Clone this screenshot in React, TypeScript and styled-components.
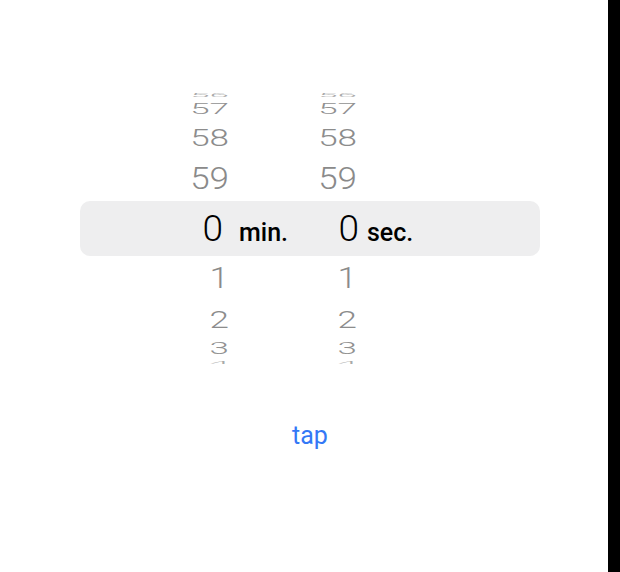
import React from "react";
import styled, { createGlobalStyle } from "styled-components";

const GlobalStyle = createGlobalStyle`
  html, body {
    margin: 0;
    padding: 0;
    background: #ffffff;
  }
  body {
    height: 572px;
    box-shadow: inset -12px 0 0 #000000;
    font-family: Roboto, "Liberation Sans", Arial, sans-serif;
  }
`;

const Screen = styled.div`
  height: 572px;
  padding-top: 88px;
  box-sizing: border-box;
  display: flex;
  flex-direction: column;
  align-items: center;
`;

const Picker = styled.div`
  width: 460px;
  display: flex;
  flex-direction: column;
`;

const WheelRow = styled.div<{ $height: number; $clip?: boolean }>`
  height: ${(p) => p.$height}px;
  display: grid;
  grid-template-columns: 149px 73px 55px 1fr;
  grid-auto-rows: ${(p) => p.$height}px;
  align-items: center;
  overflow: ${(p) => (p.$clip ? "hidden" : "visible")};
`;

const Digit = styled.span<{ $squash: number; $tone: string }>`
  justify-self: end;
  align-self: center;
  font-size: 35px;
  line-height: 1;
  font-weight: 300;
  color: ${(p) => p.$tone};
  transform: scaleY(${(p) => p.$squash});
  transform-origin: center;
`;

const Spacer = styled.span``;

const SelectedRow = styled.div`
  margin: 5px 0 0;
  height: 55px;
  border-radius: 10px;
  background: #eeeeef;
  display: grid;
  grid-template-columns: 143px 80px 56px 1fr;
  align-items: baseline;
  align-content: center;
`;

const SelectedDigit = styled.span`
  justify-self: end;
  font-size: 37px;
  line-height: 1;
  font-weight: 300;
  color: #000000;
`;

const Unit = styled.span<{ $inset: number }>`
  padding-left: ${(p) => p.$inset}px;
  font-size: 25px;
  line-height: 1;
  font-weight: 500;
  color: #000000;
`;

const TapButton = styled.button`
  margin-top: 55px;
  border: none;
  background: none;
  padding: 0;
  font-family: Roboto, "Liberation Sans", Arial, sans-serif;
  font-size: 25px;
  line-height: 1;
  color: #3478f6;
  cursor: pointer;
`;

type Row = { value: number; height: number; squash: number; tone: string };

const above: Row[] = [
  { value: 56, height: 14, squash: 0.16, tone: "#a9a9a9" },
  { value: 57, height: 14, squash: 0.4, tone: "#919191" },
  { value: 58, height: 44, squash: 0.66, tone: "#8c8c8c" },
  { value: 59, height: 36, squash: 0.92, tone: "#8a8a8a" },
];

const below: Row[] = [
  { value: 1, height: 44, squash: 0.82, tone: "#8a8a8a" },
  { value: 2, height: 40, squash: 0.68, tone: "#8c8c8c" },
  { value: 3, height: 16, squash: 0.46, tone: "#919191" },
  { value: 4, height: 12, squash: 0.1, tone: "#a9a9a9" },
];

function renderRows(rows: Row[]) {
  return rows.map((r) => (
    <WheelRow key={r.value} $height={r.height}>
      <Digit $squash={r.squash} $tone={r.tone}>
        {r.value}
      </Digit>
      <Spacer />
      <Digit $squash={r.squash} $tone={r.tone}>
        {r.value}
      </Digit>
    </WheelRow>
  ));
}

export default function App() {
  return (
    <>
      <GlobalStyle />
      <Screen>
        <Picker>
          {renderRows(above)}
          <SelectedRow>
            <SelectedDigit>0</SelectedDigit>
            <Unit $inset={16}>min.</Unit>
            <SelectedDigit>0</SelectedDigit>
            <Unit $inset={8}>sec.</Unit>
          </SelectedRow>
          {renderRows(below)}
        </Picker>
        <TapButton>tap</TapButton>
      </Screen>
    </>
  );
}
